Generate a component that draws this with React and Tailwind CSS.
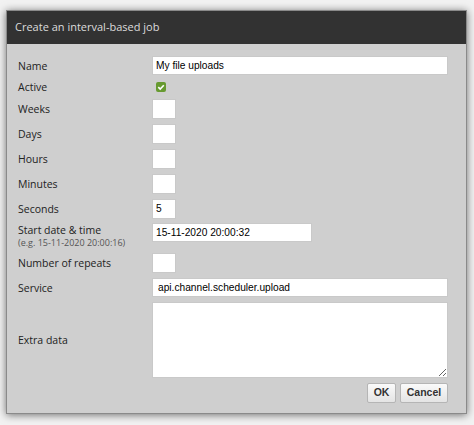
import React from 'react'

const label = "text-[10.5px] text-[#222] leading-[14px]"
const input = "h-[19px] bg-white border border-[#c9c9c9] px-[3px] text-[10.2px] text-black outline-none font-['Liberation_Sans',Arial,sans-serif]"
const btn = "h-[20px] rounded-[2px] border border-[#b5b5b5] bg-gradient-to-b from-[#fafafa] to-[#e4e4e4] text-[10.5px] font-bold text-[#333] font-['Liberation_Sans',Arial,sans-serif]"

function Row({ name, children, h = 'h-[21px]' }) {
  return (
    <div className={`flex items-center ${h}`}>
      <div className={`w-[134px] ${label}`}>{name}</div>
      {children}
    </div>
  )
}

function Small({ value = '' }) {
  return <input readOnly value={value} className={`${input} w-[24px] h-[20px]`} />
}

export default function App() {
  return (
    <div className="min-h-screen bg-[#f2f2f2] pt-[10px] pl-[6px] font-['Open_Sans','DejaVu_Sans',sans-serif]">
      <div className="w-[461px] h-[404px] flex flex-col bg-[#cfcfcf] border border-[#8a8a8a] shadow-[0_1px_8px_rgba(0,0,0,0.55)]">
        {/* Header */}
        <div className="h-[33px] shrink-0 bg-[#323232] flex items-center pl-[8px] text-[11px] text-[#dcdcdc]">
          Create an interval-based job
        </div>

        {/* Form */}
        <div className="flex flex-col gap-[4px] pt-[11px] pl-[11px] pr-[18px]">
          <Row name="Name">
            <input readOnly value="My file uploads" className={`${input} w-[296px]`} />
          </Row>
          <Row name="Active" h="h-[14px]">
            <svg width="10" height="10" viewBox="0 0 10 10" className="ml-[4px]">
              <rect x="0" y="0" width="10" height="10" rx="2" fill="#679a30" />
              <path d="M2.3 5.1 L4.2 7 L7.8 3.2" stroke="#fff" strokeWidth="1.6" fill="none" />
            </svg>
          </Row>
          <Row name="Weeks"><Small /></Row>
          <Row name="Days"><Small /></Row>
          <Row name="Hours"><Small /></Row>
          <Row name="Minutes"><Small /></Row>
          <Row name="Seconds"><Small value="5" /></Row>
          <div className="flex items-start h-[25px]">
            <div className="w-[134px]">
              <div className={label}>Start date &amp; time</div>
              <div className="text-[9px] text-[#555] leading-[11px]">(e.g. 15-11-2020 20:00:16)</div>
            </div>
            <input readOnly value="15-11-2020 20:00:32" className={`${input} w-[160px]`} />
          </div>
          <Row name="Number of repeats"><Small /></Row>
          <Row name="Service">
            <input readOnly value="api.channel.scheduler.upload" className={`${input} w-[296px] pl-[5px]`} />
          </Row>
          <Row name="Extra data" h="h-[76px]">
            <textarea readOnly className={`${input} w-[296px] h-[76px] resize-y`} />
          </Row>
          <div className="flex justify-end items-center gap-[4px] h-[22px]">
            <button className={`${btn} w-[29px]`}>OK</button>
            <button className={`${btn} w-[48px]`}>Cancel</button>
          </div>
        </div>
      </div>
    </div>
  )
}
